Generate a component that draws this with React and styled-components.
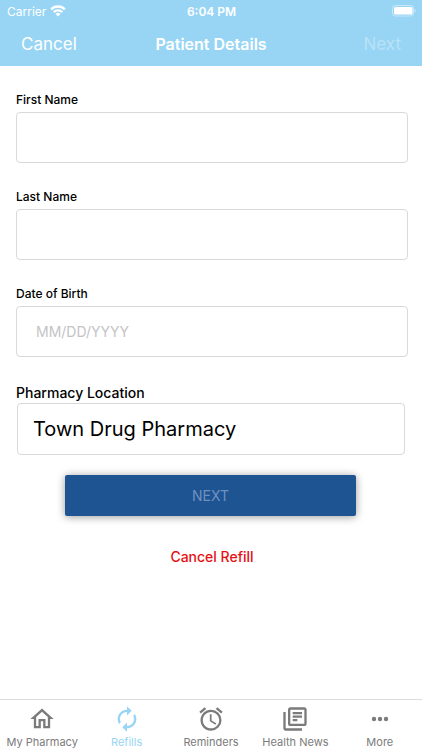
import React from "react";
import styled, { createGlobalStyle } from 'styled-components';
import { MdOutlineHome, MdAutorenew, MdAccessAlarm, MdOutlineLibraryBooks } from 'react-icons/md';


const tabs = [
  { name: 'My Pharmacy', Icon: MdOutlineHome },
  { name: 'Refills', Icon: MdAutorenew, active: true },
  { name: 'Reminders', Icon: MdAccessAlarm },
  { name: 'Health News', Icon: MdOutlineLibraryBooks },
  { name: 'More', Icon: DotsIcon },
]

function DotsIcon() {
  return (
    <svg viewBox="0 0 28 28" fill="currentColor">
      <circle cx="8" cy="14" r="2.2" />
      <circle cx="14" cy="14" r="2.2" />
      <circle cx="20" cy="14" r="2.2" />
    </svg>
  )
}

function WifiIcon() {
  return (
    <svg width="16" height="12" viewBox="0 0 16 12" fill="none" stroke="#fff" strokeWidth="2.4">
      <path d="M1.2 4.3a9.6 9.6 0 0 1 13.6 0" />
      <path d="M3.8 7.1a6 6 0 0 1 8.4 0" />
      <path d="M8 11.4 5.6 9a3.4 3.4 0 0 1 4.8 0z" fill="#fff" stroke="none" />
    </svg>
  )
}

function BatteryIcon() {
  return (
    <svg width="25" height="12" viewBox="0 0 25 12">
      <rect x="1.5" y=".5" width="21" height="10.5" rx="3" fill="none" stroke="#fff" strokeOpacity=".45" />
      <rect x="3" y="2" width="18.5" height="7.5" rx="1.5" fill="#fff" />
      <path d="M23.6 4v3.6c.7-.3 1.1-1 1.1-1.8s-.4-1.5-1.1-1.8z" fill="#fff" fillOpacity=".5" />
    </svg>
  )
}

function Field({ id, label, placeholder }) {
  return (
    <FieldContainer>
      <Label htmlFor={id}>{label}</Label>
      <Input id={id} type='text' placeholder={placeholder} />
    </FieldContainer>
  )
}

function App() {

  return (
    <Screen>
      <GlobalStyle />
      <Header>
        <StatusBar>
          <Carrier>Carrier <WifiIcon /></Carrier>
          <Time>6:04 PM</Time>
          <Battery><BatteryIcon /></Battery>
        </StatusBar>
        <NavBar>
          <NavButton type='button'>Cancel</NavButton>
          <Title>Patient Details</Title>
          <NavButton type='button' $right disabled>Next</NavButton>
        </NavBar>
      </Header>
      <Form>
        <Field id='firstName' label='First Name' />
        <Field id='lastName' label='Last Name' />
        <Field id='birthDate' label='Date of Birth' placeholder='MM/DD/YYYY' />
        <Label htmlFor='location' $large>Pharmacy Location</Label>
        <Select id='location'>
          <option>Town Drug Pharmacy</option>
        </Select>
        <NextButton type='button' disabled>NEXT</NextButton>
        <CancelButton type='button'>Cancel Refill</CancelButton>
      </Form>
      <TabBar>
        {tabs.map(({ name, Icon, active }) => (
          <Tab key={name} href='#' $active={active}>
            <Icon />
            {name}
          </Tab>
        ))}
      </TabBar>
    </Screen>
  )
}

export default App;

const GlobalStyle = createGlobalStyle`
  * {
    box-sizing: border-box;
  }

  body {
    margin: 0;
    background: #fff;
    color: #000;
    font-family: Inter, "Liberation Sans", sans-serif;
  }

  button, input, select {
    font-family: inherit;
  }
`

const Screen = styled.div`
  display: flex;
  flex-direction: column;
  min-height: 100vh;
`

const Header = styled.header`
  background: #98d5f4;
  color: #fff;
`

const StatusBar = styled.div`
  display: grid;
  grid-template-columns: 1fr auto 1fr;
  align-items: center;
  height: 22px;
  padding: 0 6px 0 7px;
  font-size: 12px;
`

const Carrier = styled.span`
  display: flex;
  align-items: center;
  gap: 4px;
`

const Time = styled.span`
  font-weight: 600;
`

const Battery = styled.span`
  display: flex;
  justify-content: flex-end;
`

const NavBar = styled.div`
  display: grid;
  grid-template-columns: 1fr auto 1fr;
  align-items: center;
  height: 44px;
  padding: 0 21px;
`

const NavButton = styled.button`
  justify-self: ${({ $right }) => $right ? 'end' : 'start'};
  padding: 0;
  border: 0;
  background: none;
  color: #fff;
  font-size: 17px;

  &:disabled {
    color: #b9e2f7;
  }
`

const Title = styled.h1`
  margin: 0;
  font-size: 16px;
  font-weight: 600;
`

const Form = styled.form`
  display: flex;
  flex-direction: column;
  flex: 1;
  padding: 26px 14px 24px 16px;
`

const FieldContainer = styled.div`
  display: flex;
  flex-direction: column;
  gap: 4px;
  margin-bottom: 26px;
`

const Label = styled.label`
  font-size: ${({ $large }) => $large ? '14px' : '12px'};
  font-weight: 500;
  line-height: ${({ $large }) => $large ? '20px' : '16px'};
`

const Input = styled.input`
  width: 100%;
  height: 51px;
  padding: 0 19px;
  border: 1px solid #d9d9d9;
  border-radius: 4px;
  background: #fff;
  font-size: 14px;

  &::placeholder {
    color: #c4c4c6;
  }
`

const Select = styled.select`
  appearance: none;
  height: 52px;
  margin: 0 3px 0 1px;
  padding: 0 15px;
  border: 1px solid #d9d9d9;
  border-radius: 4px;
  background: #fff;
  color: #000;
  font-size: 20px;
`

const NextButton = styled.button`
  height: 41px;
  margin: 20px 52px 0 49px;
  border: 0;
  border-radius: 2px;
  background: #1f5493;
  box-shadow: 0 1px 8px rgba(0, 0, 0, .4);
  font-size: 14px;

  &:disabled {
    color: #6f92bf;
  }
`

const CancelButton = styled.button`
  align-self: center;
  margin-top: 31px;
  padding: 0;
  border: 0;
  background: none;
  color: #e60f14;
  font-size: 14px;
  font-weight: 500;
  line-height: 20px;
`

const TabBar = styled.nav`
  display: grid;
  grid-template-columns: repeat(5, 1fr);
  height: 51px;
  border-top: 1px solid #dcdcdc;
`

const Tab = styled.a`
  display: flex;
  flex-direction: column;
  align-items: center;
  gap: 1px;
  padding-top: 5px;
  color: ${({ $active }) => $active ? '#98d5f4' : '#7b7b7b'};
  font-size: 11px;
  line-height: 16px;
  text-decoration: none;
  white-space: nowrap;

  & svg {
    width: 28px;
    height: 28px;
  }
`
